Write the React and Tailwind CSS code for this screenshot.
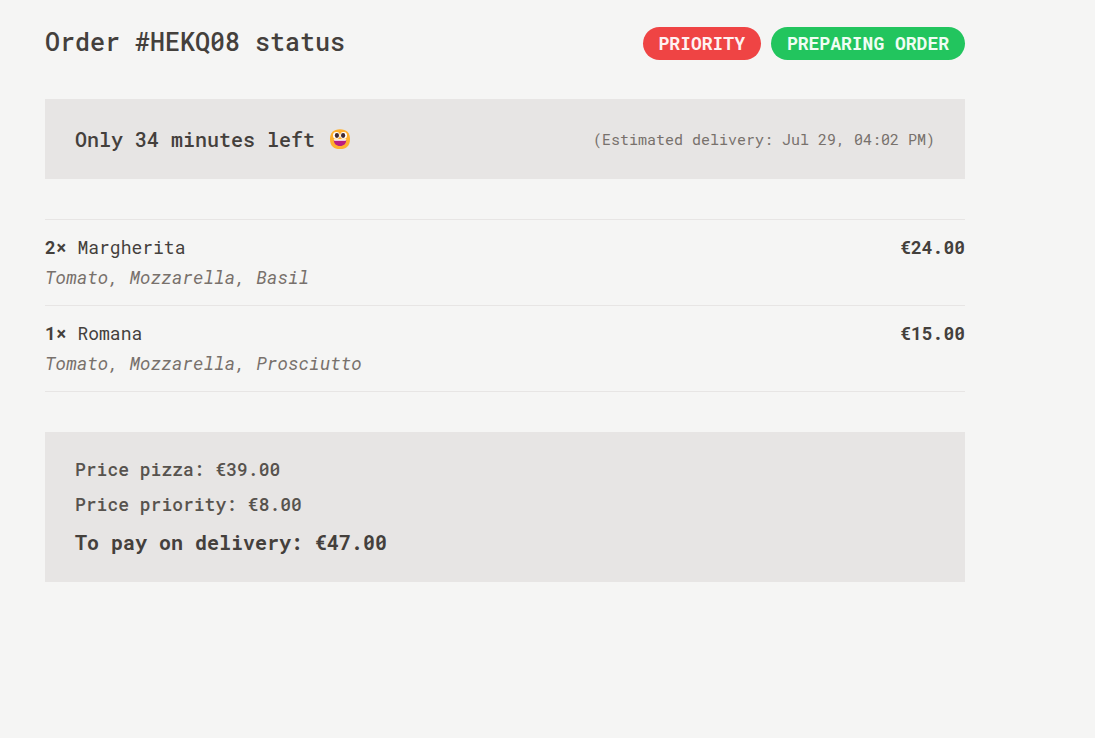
import React from 'react';

const order = {
  id: 'HEKQ08',
  status: 'preparing order',
  priority: true,
  minutesLeft: 34,
  estimatedDelivery: 'Jul 29, 04:02 PM',
  orderPrice: 39,
  priorityPrice: 8,
  cart: [
    { pizzaId: 1, name: 'Margherita', quantity: 2, totalPrice: 24, ingredients: ['Tomato', 'Mozzarella', 'Basil'] },
    { pizzaId: 2, name: 'Romana', quantity: 1, totalPrice: 15, ingredients: ['Tomato', 'Mozzarella', 'Prosciutto'] }
  ]
};

const formatCurrency = (value) =>
  new Intl.NumberFormat('en', { style: 'currency', currency: 'EUR' }).format(value);

const HappyFace = () => (
  <svg viewBox="0 0 20 20" className="w-5 h-5" role="img" aria-label="smiling face">
    <path d="M10 0.300C16.500 0.300 20 3.800 20 10.200s-3.500 9.800-10 9.800S0 16.600 0 10.200 3.500 0.300 10 0.300z" fill="#ffb02e" />
    <circle cx="6.400" cy="6.400" r="3.400" fill="#fff" />
    <circle cx="13.600" cy="6.400" r="3.400" fill="#fff" />
    <ellipse cx="6.900" cy="6.500" rx="2.100" ry="2.400" fill="#402a32" />
    <ellipse cx="13.100" cy="6.500" rx="2.100" ry="2.400" fill="#402a32" />
    <path d="M3.800 11h12.400c0 3.700-2.500 6-6.200 6s-6.200-2.300-6.200-6z" fill="#bb1d80" />
    <path d="M3.800 10.200h12.400c0 1-.5 1.500-1.400 1.500H5.200c-.9 0-1.400-.5-1.400-1.500z" fill="#fff" />
  </svg>
);

const OrderItem = ({ item }) => (
  <li className="pt-3 pb-[13px]">
    <div className="flex items-center justify-between gap-4">
      <p>
        <span className="font-bold">{item.quantity}&times;</span> {item.name}
      </p>
      <p className="font-bold">{formatCurrency(item.totalPrice)}</p>
    </div>
    <p className="italic text-[#78716c]">{item.ingredients.join(', ')}</p>
  </li>
);

const App = () => {
  const { id, status, priority, minutesLeft, estimatedDelivery, orderPrice, priorityPrice, cart } = order;

  return (
    <div className="min-h-screen bg-[#f5f5f4] text-[#44403c] font-['Roboto_Mono','Noto_Sans_Mono','DejaVu_Sans_Mono',monospace]">
      <main className="pt-[27px] pb-10 pl-[45px] pr-[130px]">
        {/* Title and status badges */}
        <div className="mb-[39px] flex flex-wrap items-start justify-between gap-2">
          <h1 className="text-[25px] leading-[30px] font-medium">Order #{id} status</h1>
          <div className="flex gap-[10px] text-[18px] leading-[23px] font-bold uppercase">
            {priority && (
              <span className="rounded-full bg-[#ef4444] px-4 py-[5px] text-[#fef2f2]">Priority</span>
            )}
            <span className="rounded-full bg-[#22c55e] px-4 py-[5px] text-[#f0fdf4]">{status}</span>
          </div>
        </div>

        {/* Delivery estimate */}
        <div className="mb-10 flex flex-wrap items-center justify-between gap-2 bg-[#e7e5e4] px-[30px] py-[25px]">
          <p className="flex items-center gap-[15px] text-[20px] leading-[30px] font-medium">
            Only {minutesLeft} minutes left
            <HappyFace />
          </p>
          <p className="text-[15px] leading-5 text-[#78716c]">(Estimated delivery: {estimatedDelivery})</p>
        </div>

        <ul className="mb-10 divide-y divide-[#e7e5e4] border-y border-[#e7e5e4] text-[18px] leading-[30px]">
          {cart.map((item) => (
            <OrderItem key={item.pizzaId} item={item} />
          ))}
        </ul>

        {/* Totals */}
        <div className="space-y-[10px] bg-[#e7e5e4] px-[30px] py-[25px]">
          <p className="text-[18px] leading-[25px] font-medium text-[#57534e]">
            Price pizza: {formatCurrency(orderPrice)}
          </p>
          {priority && (
            <p className="text-[18px] leading-[25px] font-medium text-[#57534e]">
              Price priority: {formatCurrency(priorityPrice)}
            </p>
          )}
          <p className="text-[20px] leading-[30px] font-bold">
            To pay on delivery: {formatCurrency(orderPrice + priorityPrice)}
          </p>
        </div>
      </main>
    </div>
  );
};

export default App;
